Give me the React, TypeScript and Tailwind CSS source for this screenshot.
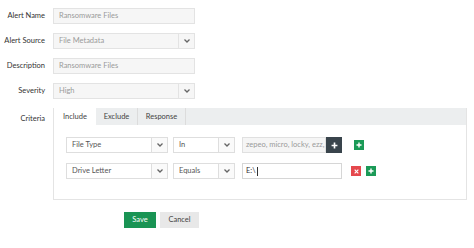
import React from 'react';

const Chevron: React.FC = () => (
  <svg width="6" height="4" viewBox="0 0 6 4" className="text-[#666]">
    <path d="M0.5 0.5 L3 3 L5.5 0.5" fill="none" stroke="currentColor" strokeWidth="1.3" />
  </svg>
);

const Plus: React.FC<{ size?: number }> = ({ size = 6 }) => (
  <svg width={size} height={size} viewBox="0 0 6 6">
    <path d="M3 0.5 V5.5 M0.5 3 H5.5" stroke="white" strokeWidth="1.4" />
  </svg>
);

const Cross: React.FC = () => (
  <svg width="5" height="5" viewBox="0 0 6 6">
    <path d="M0.8 0.8 L5.2 5.2 M5.2 0.8 L0.8 5.2" stroke="white" strokeWidth="1.4" />
  </svg>
);

const Select: React.FC<{ value: string; width: string; muted?: boolean }> = ({ value, width, muted }) => (
  <div
    className={`flex h-[16px] ${width} border ${
      muted ? 'border-[#e3e3e3] bg-[#f6f6f6] text-[#9a9a9a]' : 'border-[#dedede] bg-white text-[#555]'
    }`}
  >
    <div className="flex-1 flex items-center px-[5px]">{value}</div>
    <div className={`w-[16px] flex items-center justify-center border-l ${muted ? 'border-[#e3e3e3]' : 'border-[#dedede] bg-[#fafafa]'}`}>
      <Chevron />
    </div>
  </div>
);

const Field: React.FC<{ label: string; children: React.ReactNode }> = ({ label, children }) => (
  <div className="flex items-center h-[16px]">
    <div className="w-[45px] text-right text-[#333] whitespace-nowrap">{label}</div>
    <div className="ml-[8px]">{children}</div>
  </div>
);

const TextBox: React.FC<{ value: string }> = ({ value }) => (
  <div className="flex items-center h-[16px] w-[142px] px-[5px] border border-[#e3e3e3] bg-[#f6f6f6] text-[#9a9a9a]">
    {value}
  </div>
);

export default function App() {
  return (
    <div
      className="w-[474px] h-[248px] bg-white text-[7.5px] overflow-hidden"
      style={{ fontFamily: 'Lato, "Open Sans", sans-serif' }}
    >
      <div className="pt-[8px] flex flex-col gap-[9px]">
        <Field label="Alert Name">
          <TextBox value="Ransomware Files" />
        </Field>
        <Field label="Alert Source">
          <Select value="File Metadata" width="w-[142px]" muted />
        </Field>
        <Field label="Description">
          <TextBox value="Ransomware Files" />
        </Field>
        <Field label="Severity">
          <Select value="High" width="w-[142px]" muted />
        </Field>
      </div>

      <div className="flex mt-[9px]">
        <div className="w-[45px] text-right text-[#333] pt-[5px]">Criteria</div>
        <div className="ml-[8px] w-[414px] h-[92px] border border-[#e4e4e4] border-t-0">
          <div className="flex h-[17px] bg-[#eceeef] text-[#444]">
            <div className="w-[42px] bg-white flex items-center justify-center">Include</div>
            <div className="w-[42px] flex items-center justify-center border-r border-[#dcdcdc]">Exclude</div>
            <div className="w-[48px] flex items-center justify-center border-r border-[#dcdcdc]">Response</div>
          </div>

          <div className="pl-[12px] pt-[12px] flex flex-col gap-[10px]">
            <div className="flex items-center h-[16px]">
              <Select value="File Type" width="w-[102px]" />
              <div className="ml-[5px]">
                <Select value="In" width="w-[62px]" />
              </div>
              <div className="ml-[7px] flex h-[16px]">
                <div className="w-[84px] flex items-center px-[3px] border border-[#e0e0e0] bg-[#f5f5f5] text-[#9a9a9a] whitespace-nowrap overflow-hidden">
                  zepeo, micro, locky, ezz,
                </div>
                <div className="w-[16px] bg-[#39444c] flex items-center justify-center">
                  <Plus size={7} />
                </div>
              </div>
              <div className="ml-[12px] w-[10px] h-[10px] bg-[#1b9a57] flex items-center justify-center">
                <Plus />
              </div>
            </div>

            <div className="flex items-center h-[16px]">
              <Select value="Drive Letter" width="w-[102px]" />
              <div className="ml-[5px]">
                <Select value="Equals" width="w-[62px]" />
              </div>
              <div className="ml-[7px] w-[100px] h-[16px] flex items-center px-[3px] border border-[#d6d6d6] bg-white text-[#333]">
                E:\<span className="w-px h-[9px] bg-[#333] ml-px" />
              </div>
              <div className="ml-[9px] w-[10px] h-[10px] bg-[#e5484d] flex items-center justify-center">
                <Cross />
              </div>
              <div className="ml-[5px] w-[10px] h-[10px] bg-[#1b9a57] flex items-center justify-center">
                <Plus />
              </div>
            </div>
          </div>
        </div>
      </div>

      <div className="flex ml-[124px] mt-[12px] gap-[4px]">
        <div className="w-[32px] h-[16px] bg-[#1a9454] text-white flex items-center justify-center">Save</div>
        <div className="w-[39px] h-[16px] bg-[#e8e8e8] text-[#444] flex items-center justify-center">Cancel</div>
      </div>
    </div>
  );
}
